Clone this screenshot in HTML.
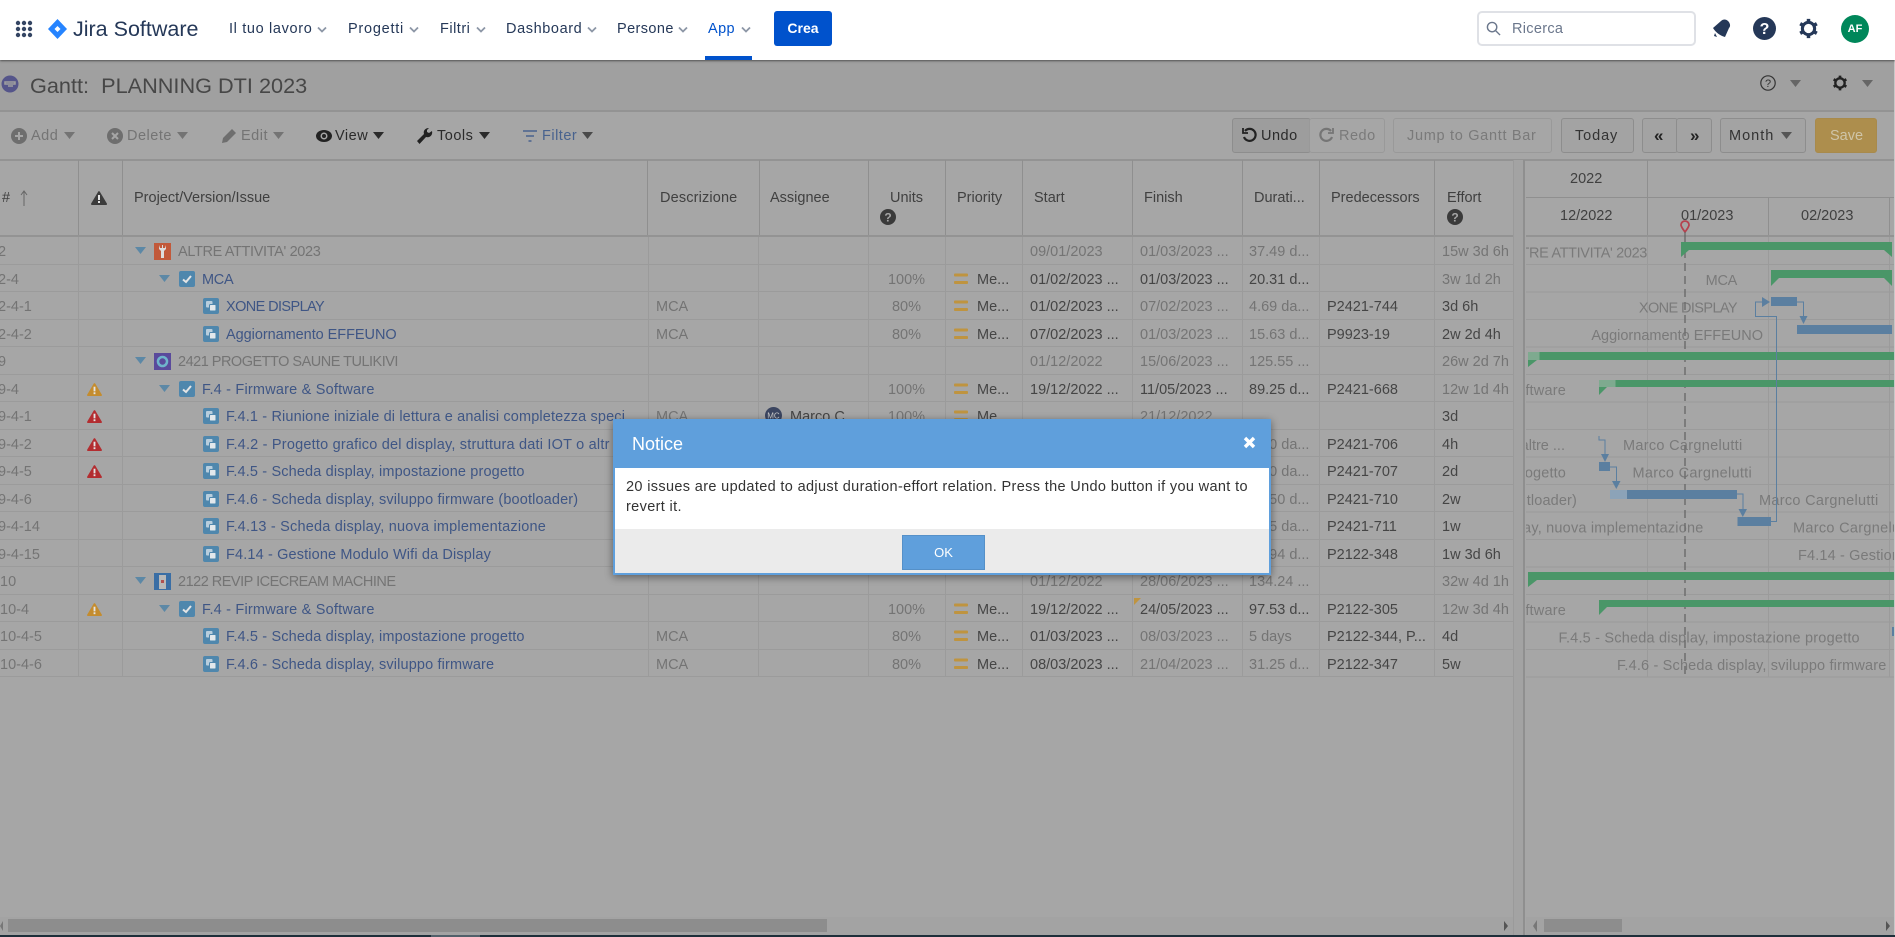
<!DOCTYPE html>
<html lang="it"><head><meta charset="utf-8"><title>Gantt: PLANNING DTI 2023</title>
<style>
html,body{margin:0;padding:0;width:1895px;height:937px;overflow:hidden;background:#a6a6a6;font-family:"Liberation Sans",sans-serif;font-size:14.5px;color:#454545}
.a,.r span,.r svg{position:absolute}
.a{white-space:nowrap}
#nav{position:absolute;left:0;top:0;width:1895px;height:60px;background:#fff;box-shadow:0 1px 2px rgba(0,0,0,.5);z-index:3;color:#253858}
#nav .a{line-height:20px;top:19px}
#title{position:absolute;left:0;top:60px;width:1895px;height:50px;background:#a0a0a0;border-bottom:2px solid #939393}
#tb{position:absolute;left:0;top:112px;width:1895px;height:47px;background:#a6a6a6;border-bottom:2px solid #939393}
.t{line-height:20px;top:126px;letter-spacing:.5px}
.btn{position:absolute;top:118px;height:33px;border:1px solid #8d8d8d;border-radius:3px;background:#a3a3a3;box-sizing:content-box}
.r{position:absolute;left:0;width:1513px;height:26.5px;border-bottom:1px solid #9b9b9b}
.r span{line-height:31px;top:0;white-space:nowrap}
.g{color:#747474}.l{color:#3f5685}
.c1{left:-2px}.c3{left:178px;letter-spacing:-.5px}.c4{left:202px;letter-spacing:.2px}.c5{left:226px;letter-spacing:.14px}.d{left:656px}.u{left:868px;width:77px;text-align:center}
.m{left:977px}.s{left:1030px}.f{left:1140px}.du{left:1249px;width:70px;overflow:hidden}.p{left:1327px}.e{left:1442px}
.v{position:absolute;width:1px;top:237px;height:440px;background:#9b9b9b}
.vh{position:absolute;width:1px;top:160px;height:75px;background:#8f8f8f}
.h{line-height:20px;top:188px;color:#404040}
</style></head><body>
<svg width="0" height="0" style="position:absolute">
<defs>
<symbol id="warn" viewBox="0 0 16 14"><path d="M8 1.200 15 13H1Z" fill="currentColor" stroke="currentColor" stroke-width="2" stroke-linejoin="round"/><rect x="7" y="4" width="2" height="5" fill="#e5e5e5"/><rect x="7" y="10" width="2" height="2" fill="#e5e5e5"/></symbol>
<symbol id="story" viewBox="0 0 16 16"><rect width="16" height="16" rx="2" fill="#4f87ad"/><rect x="3" y="3" width="6.500" height="6.500" rx="1" fill="#b8cedd"/><rect x="6.500" y="6.500" width="6.500" height="6.500" rx="1" fill="#e2e8ec" stroke="#4f87ad"/></symbol>
<symbol id="chk" viewBox="0 0 16 16"><rect width="16" height="16" rx="2" fill="#4f87ad"/><path d="M4 8.500 7 11 12 5" fill="none" stroke="#e5e5e5" stroke-width="2"/></symbol>
<symbol id="tri" viewBox="0 0 11 7"><path d="M0 0H11L5.500 7Z" fill="currentColor"/></symbol>
<symbol id="chev" viewBox="0 0 10 7"><path d="M1 1.500 5 5.500 9 1.500" fill="none" stroke="#8c96a6" stroke-width="1.800"/></symbol>
<symbol id="gear" viewBox="0 0 24 24"><circle cx="12" cy="12" r="7" fill="none" stroke="currentColor" stroke-width="3.500"/><g stroke="currentColor" stroke-width="4"><path d="M12 1v4M12 19v4M2.500 6.500 6 8.500M18 15.500l3.500 2M2.500 17.500 6 15.500M18 8.500l3.500-2"/></g></symbol>
<symbol id="qm" viewBox="0 0 16 16"><circle cx="8" cy="8" r="8" fill="currentColor"/><text x="8" y="12.500" text-anchor="middle" font-family="Liberation Sans" font-weight="700" font-size="12" fill="#a6a6a6">?</text></symbol>
<symbol id="pri" viewBox="0 0 14 14"><g fill="#bf9440"><rect y="1.500" width="14" height="3" rx="1"/><rect y="9" width="14" height="3" rx="1"/></g></symbol>
</defs></svg>

<div id="nav">
<svg class="a" style="left:15px;top:20px" width="18" height="18" viewBox="0 0 18 18" fill="#344563"><g><circle cx="3" cy="3" r="2.200"/><circle cx="9" cy="3" r="2.200"/><circle cx="15" cy="3" r="2.200"/><circle cx="3" cy="9" r="2.200"/><circle cx="9" cy="9" r="2.200"/><circle cx="15" cy="9" r="2.200"/><circle cx="3" cy="15" r="2.200"/><circle cx="9" cy="15" r="2.200"/><circle cx="15" cy="15" r="2.200"/></g></svg>
<svg class="a" style="left:48px;top:19px" width="19" height="20" viewBox="0 0 19 20"><path d="M9.500 0 19 10 9.500 20 0 10Z" fill="#2684ff"/><path d="M9.500 7 12.500 10 9.500 13 6.500 10Z" fill="#fff"/></svg>
<span class="a" style="left:73px;font-size:21.5px;color:#253858">Jira Software</span>
<span class="a" style="left:229px;letter-spacing:.65px">Il tuo lavoro</span><svg class="a" style="left:317px;top:26px" width="10" height="7"><use href="#chev"/></svg>
<span class="a" style="left:348px;letter-spacing:.75px">Progetti</span><svg class="a" style="left:409px;top:26px" width="10" height="7"><use href="#chev"/></svg>
<span class="a" style="left:440px;letter-spacing:.5px">Filtri</span><svg class="a" style="left:476px;top:26px" width="10" height="7"><use href="#chev"/></svg>
<span class="a" style="left:506px;letter-spacing:.6px">Dashboard</span><svg class="a" style="left:587px;top:26px" width="10" height="7"><use href="#chev"/></svg>
<span class="a" style="left:617px;letter-spacing:.4px">Persone</span><svg class="a" style="left:678px;top:26px" width="10" height="7"><use href="#chev"/></svg>
<span class="a" style="left:708px;color:#0052cc;letter-spacing:.4px">App</span><svg class="a" style="left:741px;top:26px" width="10" height="7"><use href="#chev"/></svg>
<div class="a" style="left:705px;top:56px;width:47px;height:4px;background:#0052cc"></div>
<div class="a" style="left:774px;top:11px;width:58px;height:35px;background:#0052cc;border-radius:3px;color:#fff;font-weight:700;font-size:14px;line-height:35px;text-align:center">Crea</div>
<div class="a" style="left:1477px;top:11px;width:215px;height:31px;border:2px solid #dfe1e6;border-radius:5px"></div>
<svg class="a" style="left:1486px;top:21px" width="15" height="15" viewBox="0 0 16 16" fill="none" stroke="#6b778c" stroke-width="1.500"><circle cx="6.500" cy="6.500" r="5"/><path d="M10.500 10.500 15 15"/></svg>
<span class="a" style="left:1512px;color:#6b778c;letter-spacing:.3px">Ricerca</span>
<svg class="a" style="left:1711px;top:18px" width="21" height="22" viewBox="0 0 21 22"><path d="M2 10 10 3c2-2 5-2 7 0s3 5 1 7l-4 9c-4-1-9-4-12-9Z" fill="#253858"/><path d="M4 15l-1 3 3 1Z" fill="#253858"/></svg>
<svg class="a" style="left:1753px;top:17px;color:#253858" width="23" height="23" viewBox="0 0 23 23"><circle cx="11.500" cy="11.500" r="11.500" fill="#253858"/><text x="11.500" y="17" text-anchor="middle" font-family="Liberation Sans" font-weight="700" font-size="16" fill="#fff">?</text></svg>
<svg class="a" style="left:1798px;top:18px;color:#253858" width="21" height="21"><use href="#gear"/></svg>
<div class="a" style="left:1841px;top:15px;width:28px;height:28px;border-radius:50%;background:#00875a;color:#fff;font-size:11px;font-weight:700;line-height:28px;text-align:center">AF</div>
</div>

<div id="title"></div>
<svg class="a" style="left:1px;top:75px" width="18" height="18" viewBox="0 0 18 18"><circle cx="9" cy="9" r="8.500" fill="#55558a"/><path d="M4 7h10v2H4ZM7 11h5" stroke="#a0a0a0" stroke-width="1.500" fill="none"/></svg>
<span class="a" style="left:30px;top:73px;font-size:21.700px;line-height:26px;color:#474747;white-space:pre">Gantt:  PLANNING DTI 2023</span>
<svg class="a" style="left:1760px;top:75px" width="16" height="16" viewBox="0 0 16 16"><circle cx="8" cy="8" r="7.200" fill="none" stroke="#333" stroke-width="1.200"/><text x="8" y="12" text-anchor="middle" font-family="Liberation Sans" font-size="11" fill="#333">?</text></svg>
<svg class="a" style="left:1790px;top:80px;color:#666" width="11" height="7"><use href="#tri"/></svg>
<svg class="a" style="left:1832px;top:75px;color:#222" width="16" height="16"><use href="#gear"/></svg>
<svg class="a" style="left:1862px;top:80px;color:#666" width="11" height="7"><use href="#tri"/></svg>

<div id="tb"></div>
<svg class="a" style="left:11px;top:128px" width="16" height="16" viewBox="0 0 16 16"><circle cx="8" cy="8" r="8" fill="#6e6e6e"/><path d="M4 8h8M8 4v8" stroke="#a6a6a6" stroke-width="2"/></svg>
<span class="a t" style="left:31px;color:#747474">Add</span><svg class="a" style="left:64px;top:132px;color:#747474" width="11" height="7"><use href="#tri"/></svg>
<svg class="a" style="left:107px;top:128px" width="16" height="16" viewBox="0 0 16 16"><circle cx="8" cy="8" r="8" fill="#6e6e6e"/><path d="M5 5l6 6M11 5l-6 6" stroke="#a6a6a6" stroke-width="2"/></svg>
<span class="a t" style="left:127px;color:#747474">Delete</span><svg class="a" style="left:177px;top:132px;color:#747474" width="11" height="7"><use href="#tri"/></svg>
<svg class="a" style="left:221px;top:128px" width="16" height="16" viewBox="0 0 16 16"><path d="M11 1l4 4-9 9-5 1 1-5Z" fill="#6e6e6e"/></svg>
<span class="a t" style="left:241px;color:#747474">Edit</span><svg class="a" style="left:273px;top:132px;color:#747474" width="11" height="7"><use href="#tri"/></svg>
<svg class="a" style="left:316px;top:129px" width="16" height="14" viewBox="0 0 16 14"><ellipse cx="8" cy="7" rx="8" ry="6" fill="#222"/><circle cx="8" cy="7" r="3.500" fill="#a6a6a6"/><circle cx="8" cy="7" r="2" fill="#222"/></svg>
<span class="a t" style="left:335px;color:#2b2b2b">View</span><svg class="a" style="left:373px;top:132px;color:#2b2b2b" width="11" height="7"><use href="#tri"/></svg>
<svg class="a" style="left:417px;top:128px" width="16" height="16" viewBox="0 0 16 16"><path d="M15 3l-3 2-2-1V2l2-2C8 0 6 3 7 6L0 13l2.500 3L9 9c4 1 7-2 6-6Z" fill="#222"/></svg>
<span class="a t" style="left:437px;color:#2b2b2b">Tools</span><svg class="a" style="left:479px;top:132px;color:#2b2b2b" width="11" height="7"><use href="#tri"/></svg>
<svg class="a" style="left:522px;top:129px" width="16" height="14" viewBox="0 0 16 14" stroke="#48628e" stroke-width="1.500"><path d="M1 2h14M4 7h8M6.500 12h3"/></svg>
<span class="a t" style="left:542px;color:#48628e">Filter</span><svg class="a" style="left:582px;top:132px;color:#4a4a4a" width="11" height="7"><use href="#tri"/></svg>

<div class="btn" style="left:1232px;width:77px;background:#9d9d9d"></div>
<svg class="a" style="left:1242px;top:127px" width="15" height="16" viewBox="0 0 15 16" fill="none" stroke="#222" stroke-width="2.200"><path d="M3 4a6 6 0 1 1-1 6"/><path d="M1 1v5h5" stroke-width="1.800"/></svg>
<span class="a t" style="left:1261px;color:#2b2b2b">Undo</span>
<div class="btn" style="left:1309px;width:74px;background:#a6a6a6;border-color:#999"></div>
<svg class="a" style="left:1319px;top:127px" width="15" height="16" viewBox="0 0 15 16" fill="none" stroke="#757575" stroke-width="2.200"><path d="M12 4a6 6 0 1 0 1 6"/><path d="M14 1v5H9" stroke-width="1.800"/></svg>
<span class="a t" style="left:1339px;color:#7a7a7a">Redo</span>
<div class="btn" style="left:1393px;width:157px;background:#a6a6a6;border-color:#999"></div>
<span class="a t" style="left:1407px;color:#7a7a7a;letter-spacing:.7px">Jump to Gantt Bar</span>
<div class="btn" style="left:1561px;width:71px"></div><span class="a t" style="left:1575px;color:#333;letter-spacing:.9px">Today</span>
<div class="btn" style="left:1642px;width:34px"></div><div class="btn" style="left:1676px;width:34px"></div>
<span class="a t" style="left:1654px;font-weight:700;font-size:17px;color:#222">«</span><span class="a t" style="left:1690px;font-weight:700;font-size:17px;color:#222">»</span>
<div class="btn" style="left:1720px;width:84px"></div><span class="a t" style="left:1729px;color:#333;letter-spacing:1px">Month</span><svg class="a" style="left:1781px;top:132px;color:#555" width="11" height="7"><use href="#tri"/></svg>
<div class="btn" style="left:1815px;width:60px;background:#ad8e4d;border-color:#a88a4c"></div><span class="a t" style="left:1830px;color:#cfc5a8;letter-spacing:0">Save</span>

<!-- header -->
<div class="a" style="left:0;top:235px;width:1513px;height:2px;background:#939393"></div>
<div class="a" style="left:1526px;top:235px;width:369px;height:2px;background:#939393"></div>
<div class="vh" style="left:78px"></div><div class="vh" style="left:122px"></div><div class="vh" style="left:647px"></div><div class="vh" style="left:759px"></div><div class="vh" style="left:868px"></div><div class="vh" style="left:945px"></div><div class="vh" style="left:1022px"></div><div class="vh" style="left:1132px"></div><div class="vh" style="left:1242px"></div><div class="vh" style="left:1319px"></div><div class="vh" style="left:1434px"></div>
<span class="a h" style="left:2px">#</span>
<svg class="a" style="left:20px;top:190px" width="8" height="16" viewBox="0 0 8 16" fill="none" stroke="#666"><path d="M4 16V1M1 5l3-4 3 4"/></svg>
<svg class="a" style="left:91px;top:191px;color:#3c3c3c" width="16" height="14"><use href="#warn"/></svg>
<span class="a h" style="left:134px">Project/Version/Issue</span>
<span class="a h" style="left:660px;letter-spacing:.15px">Descrizione</span>
<span class="a h" style="left:770px">Assignee</span>
<span class="a h" style="left:890px">Units</span><svg class="a" style="left:880px;top:209px;color:#3a3a3a" width="16" height="16"><use href="#qm"/></svg>
<span class="a h" style="left:957px">Priority</span><span class="a h" style="left:1034px">Start</span><span class="a h" style="left:1144px">Finish</span><span class="a h" style="left:1254px">Durati...</span><span class="a h" style="left:1331px">Predecessors</span>
<span class="a h" style="left:1447px">Effort</span><svg class="a" style="left:1447px;top:209px;color:#3a3a3a" width="16" height="16"><use href="#qm"/></svg>
<div class="a" style="left:1526px;top:197px;width:369px;height:1px;background:#8f8f8f"></div>
<div class="vh" style="left:1647px;height:75px"></div><div class="vh" style="left:1768px;top:197px;height:38px"></div><div class="vh" style="left:1889px;top:197px;height:38px"></div>
<span class="a h" style="left:1570px;top:169px">2022</span>
<span class="a h" style="left:1560px;top:206px">12/2022</span><span class="a h" style="left:1681px;top:206px">01/2023</span><span class="a h" style="left:1801px;top:206px">02/2023</span>

<!-- grid -->
<div class="v" style="left:78px"></div><div class="v" style="left:122px"></div><div class="v" style="left:648px"></div><div class="v" style="left:758px"></div><div class="v" style="left:868px"></div><div class="v" style="left:945px"></div><div class="v" style="left:1022px"></div><div class="v" style="left:1132px"></div><div class="v" style="left:1242px"></div><div class="v" style="left:1319px"></div><div class="v" style="left:1434px"></div>

<div class="r" style="top:237px"><span class="c1 g">2</span><svg style="left:135px;top:10px;color:#5c88a6" width="11" height="7"><use href="#tri"/></svg><svg style="left:154px;top:6px" width="17" height="17" viewBox="0 0 17 17"><rect width="17" height="17" fill="#c2593a"/><path d="M5 2v4l2 2v7h3V8l2-2V2l-1 3H9V2H8v3H6Z" fill="#ddd"/></svg><span class="c3 g" style="letter-spacing:-.35px">ALTRE ATTIVITA' 2023</span><span class="s g">09/01/2023</span><span class="f g">01/03/2023 ...</span><span class="du g">37.49 d...</span><span class="e g">15w 3d 6h</span></div>
<div class="r" style="top:264.500px"><span class="c1 g">2-4</span><svg style="left:159px;top:10px;color:#5c88a6" width="11" height="7"><use href="#tri"/></svg><svg style="left:179px;top:6px" width="16" height="16"><use href="#chk"/></svg><span class="c4 l" style="letter-spacing:-.3px">MCA</span><span class="u g">100%</span><svg style="left:954px;top:7px" width="14" height="14"><use href="#pri"/></svg><span class="m">Me...</span><span class="s">01/02/2023 ...</span><span class="f">01/03/2023 ...</span><span class="du">20.31 d...</span><span class="e g">3w 1d 2h</span></div>
<div class="r" style="top:292px"><span class="c1 g">2-4-1</span><svg style="left:203px;top:6px" width="16" height="16"><use href="#story"/></svg><span class="c5 l" style="letter-spacing:-.6px">XONE DISPLAY</span><span class="d g">MCA</span><span class="u g">80%</span><svg style="left:954px;top:7px" width="14" height="14"><use href="#pri"/></svg><span class="m">Me...</span><span class="s">01/02/2023 ...</span><span class="f g">07/02/2023 ...</span><span class="du g">4.69 da...</span><span class="p">P2421-744</span><span class="e">3d 6h</span></div>
<div class="r" style="top:319.500px"><span class="c1 g">2-4-2</span><svg style="left:203px;top:6px" width="16" height="16"><use href="#story"/></svg><span class="c5 l" style="letter-spacing:-.05px">Aggiornamento EFFEUNO</span><span class="d g">MCA</span><span class="u g">80%</span><svg style="left:954px;top:7px" width="14" height="14"><use href="#pri"/></svg><span class="m">Me...</span><span class="s">07/02/2023 ...</span><span class="f g">01/03/2023 ...</span><span class="du g">15.63 d...</span><span class="p">P9923-19</span><span class="e">2w 2d 4h</span></div>
<div class="r" style="top:347px"><span class="c1 g">9</span><svg style="left:135px;top:10px;color:#5c88a6" width="11" height="7"><use href="#tri"/></svg><svg style="left:154px;top:6px" width="17" height="17" viewBox="0 0 17 17"><rect width="17" height="17" fill="#5a4a9c"/><circle cx="8.500" cy="8.500" r="4.500" fill="none" stroke="#6fb4cc" stroke-width="2.500"/></svg><span class="c3 g">2421 PROGETTO SAUNE TULIKIVI</span><span class="s g">01/12/2022</span><span class="f g">15/06/2023 ...</span><span class="du g">125.55 ...</span><span class="e g">26w 2d 7h</span></div>
<div class="r" style="top:374.500px"><span class="c1 g">9-4</span><svg style="left:87px;top:8px;color:#c48c2e" width="15" height="13"><use href="#warn"/></svg><svg style="left:159px;top:10px;color:#5c88a6" width="11" height="7"><use href="#tri"/></svg><svg style="left:179px;top:6px" width="16" height="16"><use href="#chk"/></svg><span class="c4 l">F.4 - Firmware &amp; Software</span><span class="u g">100%</span><svg style="left:954px;top:7px" width="14" height="14"><use href="#pri"/></svg><span class="m">Me...</span><span class="s">19/12/2022 ...</span><span class="f">11/05/2023 ...</span><span class="du">89.25 d...</span><span class="p">P2421-668</span><span class="e g">12w 1d 4h</span></div>
<div class="r" style="top:402px"><span class="c1 g">9-4-1</span><svg style="left:87px;top:8px;color:#b32d30" width="15" height="13"><use href="#warn"/></svg><svg style="left:203px;top:6px" width="16" height="16"><use href="#story"/></svg><span class="c5 l">F.4.1 - Riunione iniziale di lettura e analisi completezza speci</span><span class="d g">MCA</span><svg style="left:765px;top:5px" width="17" height="17" viewBox="0 0 17 17"><circle cx="8.500" cy="8.500" r="8.500" fill="#3b4560"/><text x="8.500" y="11.500" text-anchor="middle" font-family="Liberation Sans" font-size="8" fill="#ccc">MC</text></svg><span style="left:790px">Marco C</span><span class="u g">100%</span><svg style="left:954px;top:7px" width="14" height="14"><use href="#pri"/></svg><span class="m">Me...</span><span class="f g">21/12/2022</span><span class="e">3d</span></div>
<div class="r" style="top:429.500px"><span class="c1 g">9-4-2</span><svg style="left:87px;top:8px;color:#b32d30" width="15" height="13"><use href="#warn"/></svg><svg style="left:203px;top:6px" width="16" height="16"><use href="#story"/></svg><span class="c5 l" style="letter-spacing:.2px">F.4.2 - Progetto grafico del display, struttura dati IOT o altr</span><span class="du g">0.50 da...</span><span class="p">P2421-706</span><span class="e">4h</span></div>
<div class="r" style="top:457px"><span class="c1 g">9-4-5</span><svg style="left:87px;top:8px;color:#b32d30" width="15" height="13"><use href="#warn"/></svg><svg style="left:203px;top:6px" width="16" height="16"><use href="#story"/></svg><span class="c5 l">F.4.5 - Scheda display, impostazione progetto</span><span class="du g">2.50 da...</span><span class="p">P2421-707</span><span class="e">2d</span></div>
<div class="r" style="top:484.500px"><span class="c1 g">9-4-6</span><svg style="left:203px;top:6px" width="16" height="16"><use href="#story"/></svg><span class="c5 l">F.4.6 - Scheda display, sviluppo firmware (bootloader)</span><span class="du g">12.50 d...</span><span class="p">P2421-710</span><span class="e">2w</span></div>
<div class="r" style="top:512px"><span class="c1 g">9-4-14</span><svg style="left:203px;top:6px" width="16" height="16"><use href="#story"/></svg><span class="c5 l" style="letter-spacing:.2px">F.4.13 - Scheda display, nuova implementazione</span><span class="du g">6.25 da...</span><span class="p">P2421-711</span><span class="e">1w</span></div>
<div class="r" style="top:539.500px"><span class="c1 g">9-4-15</span><svg style="left:203px;top:6px" width="16" height="16"><use href="#story"/></svg><span class="c5 l">F4.14 - Gestione Modulo Wifi da Display</span><span class="du g">10.94 d...</span><span class="p">P2122-348</span><span class="e">1w 3d 6h</span></div>
<div class="r" style="top:567px"><span class="c1 g" style="left:0">10</span><svg style="left:135px;top:10px;color:#5c88a6" width="11" height="7"><use href="#tri"/></svg><svg style="left:154px;top:6px" width="17" height="17" viewBox="0 0 17 17"><rect width="17" height="17" fill="#3a6ea5"/><rect x="5" y="2" width="7" height="14" fill="#b8b8b8"/><rect x="7" y="7" width="3" height="3" fill="#b05050"/></svg><span class="c3 g">2122 REVIP ICECREAM MACHINE</span><span class="s g">01/12/2022</span><span class="f g">28/06/2023 ...</span><span class="du g">134.24 ...</span><span class="e g">32w 4d 1h</span></div>
<div class="r" style="top:594.500px"><span class="c1 g" style="left:0">10-4</span><svg style="left:87px;top:8px;color:#c48c2e" width="15" height="13"><use href="#warn"/></svg><svg style="left:159px;top:10px;color:#5c88a6" width="11" height="7"><use href="#tri"/></svg><svg style="left:179px;top:6px" width="16" height="16"><use href="#chk"/></svg><span class="c4 l">F.4 - Firmware &amp; Software</span><span class="u g">100%</span><svg style="left:954px;top:7px" width="14" height="14"><use href="#pri"/></svg><span class="m">Me...</span><svg style="left:1134px;top:3px" width="7" height="7"><path d="M0 0H7L0 7Z" fill="#bf9440"/></svg><span class="s">19/12/2022 ...</span><span class="f">24/05/2023 ...</span><span class="du">97.53 d...</span><span class="p">P2122-305</span><span class="e g">12w 3d 4h</span></div>
<div class="r" style="top:622px"><span class="c1 g" style="left:0">10-4-5</span><svg style="left:203px;top:6px" width="16" height="16"><use href="#story"/></svg><span class="c5 l">F.4.5 - Scheda display, impostazione progetto</span><span class="d g">MCA</span><span class="u g">80%</span><svg style="left:954px;top:7px" width="14" height="14"><use href="#pri"/></svg><span class="m">Me...</span><span class="s">01/03/2023 ...</span><span class="f g">08/03/2023 ...</span><span class="du g">5 days</span><span class="p">P2122-344, P...</span><span class="e">4d</span></div>
<div class="r" style="top:649.500px"><span class="c1 g" style="left:0">10-4-6</span><svg style="left:203px;top:6px" width="16" height="16"><use href="#story"/></svg><span class="c5 l">F.4.6 - Scheda display, sviluppo firmware</span><span class="d g">MCA</span><span class="u g">80%</span><svg style="left:954px;top:7px" width="14" height="14"><use href="#pri"/></svg><span class="m">Me...</span><span class="s">08/03/2023 ...</span><span class="f g">21/04/2023 ...</span><span class="du g">31.25 d...</span><span class="p">P2122-347</span><span class="e">5w</span></div>

<!-- splitter -->
<div class="a" style="left:1513px;top:160px;width:12px;height:775px;background:#a3a3a3;border-left:1px solid #9a9a9a;border-right:2px solid #8f8f8f;box-sizing:border-box"></div>

<!-- gantt -->
<svg class="a" style="left:1526px;top:237px" width="369" height="441" viewBox="1526 237 369 441" font-family="Liberation Sans" font-size="14.500">
<g stroke="#9b9b9b" stroke-width="1"><path d="M1647.500 237V677M1768.500 237V677M1889.500 237V677"/>
<path d="M1526 264.500H1895M1526 292H1895M1526 319.500H1895M1526 347H1895M1526 374.500H1895M1526 402H1895M1526 429.500H1895M1526 457H1895M1526 484.500H1895M1526 512H1895M1526 539.500H1895M1526 567H1895M1526 594.500H1895M1526 622H1895M1526 649.500H1895M1526 677H1895"/></g>
<g fill="#7a7a7a">
<text x="1647" y="257.500" text-anchor="end" letter-spacing="-.35">ALTRE ATTIVITA' 2023</text>
<text x="1737" y="285" text-anchor="end" letter-spacing="-.3">MCA</text>
<text x="1737" y="312.500" text-anchor="end" letter-spacing="-.6">XONE DISPLAY</text>
<text x="1763" y="340" text-anchor="end">Aggiornamento EFFEUNO</text>
<text x="1566" y="395" text-anchor="end" letter-spacing=".2">F.4 - Firmware &amp; Software</text>
<text x="1565" y="450" text-anchor="end">F.4.2 - Progetto altre ...</text>
<text x="1623" y="450" letter-spacing=".3">Marco Cargnelutti</text>
<text x="1566" y="477.500" text-anchor="end" letter-spacing=".14">F.4.5 - Scheda display, impostazione progetto</text>
<text x="1632.500" y="477.500" letter-spacing=".3">Marco Cargnelutti</text>
<text x="1577" y="505" text-anchor="end" letter-spacing=".14">F.4.6 - Scheda display, sviluppo firmware (bootloader)</text>
<text x="1759" y="505" letter-spacing=".3">Marco Cargnelutti</text>
<text x="1703.500" y="532.500" text-anchor="end" letter-spacing=".2">F.4.13 - Scheda display, nuova implementazione</text>
<text x="1793" y="532.500" letter-spacing=".3">Marco Cargnelutti</text>
<text x="1798" y="560" letter-spacing=".14">F4.14 - Gestione Modulo Wifi da Display</text>
<text x="1566" y="615" text-anchor="end" letter-spacing=".2">F.4 - Firmware &amp; Software</text>
<text x="1558.500" y="642.500" letter-spacing=".2">F.4.5 - Scheda display, impostazione progetto</text>
<text x="1617" y="670" letter-spacing=".17">F.4.6 - Scheda display, sviluppo firmware</text>
</g>
<path d="M1685 237V677" stroke="#6e6e6e" stroke-width="1.500" stroke-dasharray="8 5"/>
<g fill="#4a9668">
<path d="M1681 242H1892V257L1884 250H1689L1681 257Z"/>
<path d="M1771 270H1892V286L1884 278H1779L1771 286Z"/>
<path d="M1528 352H1895V360H1537L1528 367Z"/>
<path d="M1599 380H1895V387H1607L1599 395Z"/>
<path d="M1528 572H1895V580H1537L1528 587Z"/>
<path d="M1599 600H1895V607H1607L1599 615Z"/>
</g>
<rect x="1528" y="352" width="11.500" height="8" fill="#7eaa8f"/>
<rect x="1599" y="380" width="16.500" height="7" fill="#7eaa8f"/>
<g fill="#5b7fa0">
<rect x="1771" y="297" width="26" height="9"/>
<rect x="1797" y="325" width="95" height="9"/>
<rect x="1599" y="462" width="11" height="9"/>
<rect x="1610" y="490" width="17" height="9" fill="#8ca3b8"/>
<rect x="1627" y="490" width="110" height="9"/>
<rect x="1737.500" y="517" width="33.500" height="9"/>
<rect x="1892" y="627" width="3" height="9"/>
<path d="M1762 297 1770 302 1762 307Z"/><path d="M1799.500 316H1807.500L1803.500 324Z"/>
<path d="M1601 454H1609L1605 462Z"/><path d="M1612 481H1620.500L1616.300 489Z"/><path d="M1738.500 509H1747L1742.800 517Z"/>
</g>
<g fill="none" stroke="#5b7fa0" stroke-width="1">
<path d="M1762 302H1755.500V316.500H1776.500V521.500H1771"/>
<path d="M1797 302H1803.500V316"/>
<path d="M1599 436V440H1605V454"/>
<path d="M1610 467H1616.500V481"/>
<path d="M1737 494H1743V509"/>
</g>
</svg>
<svg class="a" style="left:1676px;top:219px" width="18" height="18" viewBox="0 0 18 18"><path d="M9 13C6 9 5 7.500 5 6a4 4 0 0 1 8 0c0 1.500-1 3-4 7Z" fill="none" stroke="#b5424e" stroke-width="1.800"/><path d="M9 13v5" stroke="#555"/></svg>

<!-- scrollbars -->
<div class="a" style="left:0;top:917px;width:1513px;height:18px;background:#a3a3a3"></div>
<div class="a" style="left:1526px;top:917px;width:369px;height:18px;background:#a3a3a3"></div>
<div class="a" style="left:8px;top:919px;width:819px;height:13px;background:#8d8d8d"></div>
<div class="a" style="left:1544px;top:919px;width:78px;height:13px;background:#8d8d8d"></div>
<svg class="a" style="left:1503px;top:921px" width="6" height="10"><path d="M1 0 5 5 1 10Z" fill="#555"/></svg>
<svg class="a" style="left:1532px;top:920px" width="6" height="12"><path d="M5 0 1 6 5 12Z" fill="#777"/></svg>
<svg class="a" style="left:1885px;top:921px" width="6" height="10"><path d="M1 0 5 5 1 10Z" fill="#555"/></svg>
<svg class="a" style="left:0;top:921px" width="4" height="10"><path d="M3 0 0 5 3 10Z" fill="#777"/></svg>
<div class="a" style="left:0;top:935px;width:1895px;height:2px;background:#1e2f3a"></div>
<div class="a" style="left:431px;top:935px;width:49px;height:2px;background:#51606a"></div>
<div class="a" style="left:1894px;top:60px;width:1px;height:875px;background:#c8c8c8"></div>

<!-- dialog -->
<div class="a" style="left:613px;top:419px;width:658px;height:156px;z-index:5;background:#fff;box-shadow:0 2px 8px rgba(0,0,0,.45);white-space:normal">
<div style="position:absolute;left:0;top:0;width:658px;height:49px;background:#5f9fdc"></div>
<span class="a" style="left:19px;top:13px;font-size:18px;line-height:24px;color:#fff">Notice</span>
<svg class="a" style="left:630px;top:17px" width="13" height="13" viewBox="0 0 13 13"><path d="M2 2 11 11M11 2 2 11" stroke="#fff" stroke-width="3.400"/></svg>
<div class="a" style="left:13px;top:58px;width:640px;font-size:14.500px;line-height:20px;color:#333;letter-spacing:.35px;white-space:nowrap">20 issues are updated to adjust duration-effort relation. Press the Undo button if you want to<br>revert it.</div>
<div class="a" style="left:0;top:110px;width:658px;height:46px;background:#ebebeb"></div>
<div class="a" style="left:289px;top:116px;width:83px;height:35px;background:#5f9fdc;box-shadow:inset 0 0 0 1px #5590c8;color:#fff;font-size:13px;line-height:35px;text-align:center">OK</div>
<div class="a" style="left:0;top:0;width:654px;height:152px;border:2px solid #5f9fdc;pointer-events:none"></div>
</div>
</body></html>
